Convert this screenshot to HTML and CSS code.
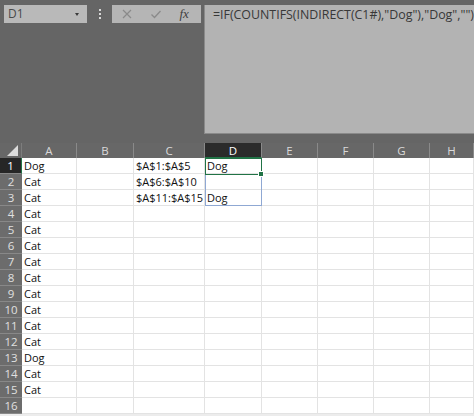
FILE: index.html
```html
<!DOCTYPE html>
<html>
<head>
<meta charset="utf-8">
<link rel="stylesheet" href="styles.css">
</head>
<body>
<div class="top">
  <div class="namebox"><span class="ref">D1</span><span class="drop"></span></div>
  <div class="dots"><i></i><i></i><i></i></div>
  <div class="tools">
    <svg class="ico" width="12" height="12" viewBox="0 0 12 12"><path d="M2 2 L10 10 M10 2 L2 10" stroke="#8a8a8a" stroke-width="1.2" fill="none"/></svg>
    <svg class="ico" width="12" height="12" viewBox="0 0 12 12"><path d="M1.5 6.5 L4.5 9.5 L10.5 3" stroke="#8a8a8a" stroke-width="1.3" fill="none"/></svg>
    <span class="fx">fx</span>
  </div>
  <div class="formula">=IF(COUNTIFS(INDIRECT(C1#),"Dog"),"Dog","")</div>
</div>
<div class="sheet">
  <div class="grid">
    <div class="corner"><span class="tri"></span></div>
    <div class="ch">A</div><div class="ch">B</div><div class="ch">C</div><div class="ch sel">D</div><div class="ch">E</div><div class="ch">F</div><div class="ch">G</div><div class="ch">H</div>

    <div class="rh sel">1</div><div class="c">Dog</div><div class="c"></div><div class="c">$A$1:$A$5</div><div class="c">Dog</div><div class="c"></div><div class="c"></div><div class="c"></div><div class="c"></div>
    <div class="rh">2</div><div class="c">Cat</div><div class="c"></div><div class="c">$A$6:$A$10</div><div class="c"></div><div class="c"></div><div class="c"></div><div class="c"></div><div class="c"></div>
    <div class="rh">3</div><div class="c">Cat</div><div class="c"></div><div class="c">$A$11:$A$15</div><div class="c">Dog</div><div class="c"></div><div class="c"></div><div class="c"></div><div class="c"></div>
    <div class="rh">4</div><div class="c">Cat</div><div class="c"></div><div class="c"></div><div class="c"></div><div class="c"></div><div class="c"></div><div class="c"></div><div class="c"></div>
    <div class="rh">5</div><div class="c">Cat</div><div class="c"></div><div class="c"></div><div class="c"></div><div class="c"></div><div class="c"></div><div class="c"></div><div class="c"></div>
    <div class="rh">6</div><div class="c">Cat</div><div class="c"></div><div class="c"></div><div class="c"></div><div class="c"></div><div class="c"></div><div class="c"></div><div class="c"></div>
    <div class="rh">7</div><div class="c">Cat</div><div class="c"></div><div class="c"></div><div class="c"></div><div class="c"></div><div class="c"></div><div class="c"></div><div class="c"></div>
    <div class="rh">8</div><div class="c">Cat</div><div class="c"></div><div class="c"></div><div class="c"></div><div class="c"></div><div class="c"></div><div class="c"></div><div class="c"></div>
    <div class="rh">9</div><div class="c">Cat</div><div class="c"></div><div class="c"></div><div class="c"></div><div class="c"></div><div class="c"></div><div class="c"></div><div class="c"></div>
    <div class="rh">10</div><div class="c">Cat</div><div class="c"></div><div class="c"></div><div class="c"></div><div class="c"></div><div class="c"></div><div class="c"></div><div class="c"></div>
    <div class="rh">11</div><div class="c">Cat</div><div class="c"></div><div class="c"></div><div class="c"></div><div class="c"></div><div class="c"></div><div class="c"></div><div class="c"></div>
    <div class="rh">12</div><div class="c">Cat</div><div class="c"></div><div class="c"></div><div class="c"></div><div class="c"></div><div class="c"></div><div class="c"></div><div class="c"></div>
    <div class="rh">13</div><div class="c">Dog</div><div class="c"></div><div class="c"></div><div class="c"></div><div class="c"></div><div class="c"></div><div class="c"></div><div class="c"></div>
    <div class="rh">14</div><div class="c">Cat</div><div class="c"></div><div class="c"></div><div class="c"></div><div class="c"></div><div class="c"></div><div class="c"></div><div class="c"></div>
    <div class="rh">15</div><div class="c">Cat</div><div class="c"></div><div class="c"></div><div class="c"></div><div class="c"></div><div class="c"></div><div class="c"></div><div class="c"></div>
    <div class="rh">16</div><div class="c"></div><div class="c"></div><div class="c"></div><div class="c"></div><div class="c"></div><div class="c"></div><div class="c"></div><div class="c"></div>
  </div>
  <div class="spill"></div>
  <div class="active"><span class="handle"></span></div>
</div>
</body>
</html>
```

FILE: styles.css
```css
html, body {
  margin: 0;
  padding: 0;
  width: 474px;
  height: 416px;
  overflow: hidden;
  background: #666666;
  font-family: "Open Sans", "Noto Sans", sans-serif;
}

.top {
  height: 143px;
  box-sizing: border-box;
  padding: 5px 0 0 4px;
  display: flex;
  align-items: flex-start;
  background: #656565;
}

.namebox {
  width: 83px;
  height: 18px;
  box-sizing: border-box;
  background: #b9b9b9;
  display: flex;
  align-items: center;
  justify-content: space-between;
  padding: 0 8px 0 4px;
}

.ref {
  font-size: 12px;
  color: #4a4a4a;
  line-height: 18px;
}

.drop {
  width: 0;
  height: 0;
  border-left: 2.5px solid transparent;
  border-right: 2.5px solid transparent;
  border-top: 3px solid #3a3a3a;
}

.dots {
  width: 26px;
  height: 18px;
  display: flex;
  flex-direction: column;
  align-items: center;
  justify-content: center;
  gap: 2px;
}

.dots i {
  width: 2px;
  height: 2px;
  background: #d8d8d8;
  display: block;
}

.tools {
  width: 89px;
  height: 18px;
  background: #b5b5b5;
  display: flex;
  align-items: center;
  padding-left: 9px;
  box-sizing: border-box;
}

.tools .ico:nth-child(2) {
  margin-left: 17px;
}

.fx {
  margin-left: 17px;
  font-family: "Liberation Serif", serif;
  font-style: italic;
  font-size: 13px;
  color: #404040;
  line-height: 18px;
}

.formula {
  margin-left: 3px;
  flex: 1;
  height: 129px;
  box-sizing: border-box;
  background: #b3b3b3;
  border-left: 1px solid #8a8a8a;
  border-bottom: 1px solid #8a8a8a;
  padding: 2px 0 0 8px;
  font-size: 12.4px;
  line-height: 16px;
  color: #383838;
  white-space: nowrap;
}

.sheet {
  position: relative;
  height: 273px;
  overflow: hidden;
  background: #ececec;
}

.grid {
  display: grid;
  grid-template-columns: 22px 55px 57px 71px 57px 56px 56px 56px 44px;
  grid-template-rows: 15px;
  grid-auto-rows: 16px;
}

.corner {
  background: #676767;
  position: relative;
  border-right: 1px solid #7d7d7d;
}

.tri {
  position: absolute;
  right: 3px;
  bottom: 2px;
  width: 0;
  height: 0;
  border-left: 11px solid transparent;
  border-bottom: 11px solid #dcdcdc;
}

.ch {
  background: #676767;
  color: #dadada;
  font-size: 11.5px;
  line-height: 15px;
  text-align: center;
  border-right: 1px solid #8a8a8a;
  box-sizing: border-box;
}

.ch.sel {
  background: #2b2b2b;
  color: #ffffff;
  border-bottom: 1px solid #217346;
}

.rh {
  background: #6c6c6c;
  color: #e0e0e0;
  font-size: 11.5px;
  line-height: 15px;
  text-align: center;
  border-bottom: 1px solid #888888;
  box-sizing: border-box;
}

.rh.sel {
  background: #262626;
  color: #ffffff;
  border-right: 1px solid #217346;
}

.c {
  background: #ffffff;
  border-right: 1px solid #e3e3e3;
  border-bottom: 1px solid #e3e3e3;
  box-sizing: border-box;
  font-size: 11px;
  line-height: 16px;
  color: #111111;
  padding-left: 2px;
  white-space: nowrap;
  overflow: hidden;
}

.spill {
  position: absolute;
  left: 205px;
  top: 15px;
  width: 57px;
  height: 48px;
  box-sizing: border-box;
  border: 1px solid #8fa8d3;
}

.active {
  position: absolute;
  left: 205px;
  top: 15px;
  width: 57px;
  height: 17px;
  box-sizing: border-box;
  border: 1.5px solid #217346;
}

.handle {
  position: absolute;
  right: -3px;
  bottom: -3px;
  width: 4px;
  height: 4px;
  background: #217346;
  border: 1px solid #ffffff;
}
```
